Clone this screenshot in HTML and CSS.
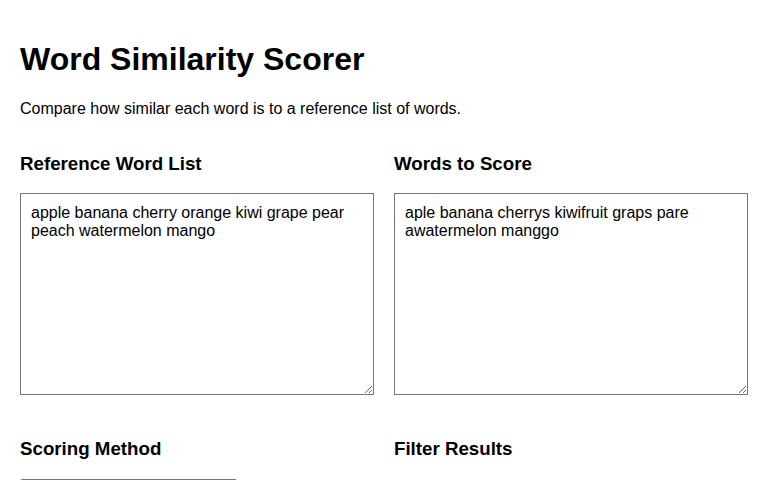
FILE: index.html
```html
<!DOCTYPE html>
<html lang="en">
<head>
    <meta charset="UTF-8">
    <meta name="viewport" content="width=device-width, initial-scale=1.0">
    <title>Word Similarity Scorer</title>
    <link rel="stylesheet" href="styles.css">
</head>
<body>
    <h1>Word Similarity Scorer</h1>
    <p>Compare how similar each word is to a reference list of words.</p>

    <div class="grid">
        <div class="field">
            <h3>Reference Word List</h3>
            <textarea id="referenceInput">apple banana cherry orange kiwi grape pear peach watermelon mango</textarea>
        </div>
        <div class="field">
            <h3>Words to Score</h3>
            <textarea id="scoreInput">aple banana cherrys kiwifruit graps pare awatermelon manggo</textarea>
        </div>
        <div class="field">
            <h3>Scoring Method</h3>
            <select id="methodSelect">
                <option>Levenshtein Distance</option>
                <option>Jaro-Winkler</option>
            </select>
        </div>
        <div class="field">
            <h3>Filter Results</h3>
            <label for="minScore">Minimum score:</label>
            <input type="number" id="minScore" value="0">
        </div>
    </div>
</body>
</html>
```

FILE: styles.css
```css
body {
    font-family: "Liberation Sans", Arial, sans-serif;
    margin: 0;
    padding: 20px;
    color: #000;
    background: #fff;
}
h1 {
    font-size: 32px;
    margin: 21.44px 0;
}
p {
    font-size: 16px;
    margin: 16px 0;
}
.grid {
    display: grid;
    grid-template-columns: 1fr 1fr;
    gap: 20px;
}
.field h3 {
    font-size: 18.72px;
    margin: 18.72px 0;
}
textarea {
    box-sizing: border-box;
    width: 100%;
    height: 202px;
    padding: 10px;
    font-family: "Liberation Sans", Arial, sans-serif;
    font-size: 16px;
    border: 1px solid #767676;
}
select {
    width: 217px;
    padding: 6px;
    font-family: "Liberation Sans", Arial, sans-serif;
    font-size: 16px;
    border: 1px solid #767676;
    border-radius: 2px;
    background: #fff;
}
label {
    display: block;
    margin-top: 40px;
}
```
